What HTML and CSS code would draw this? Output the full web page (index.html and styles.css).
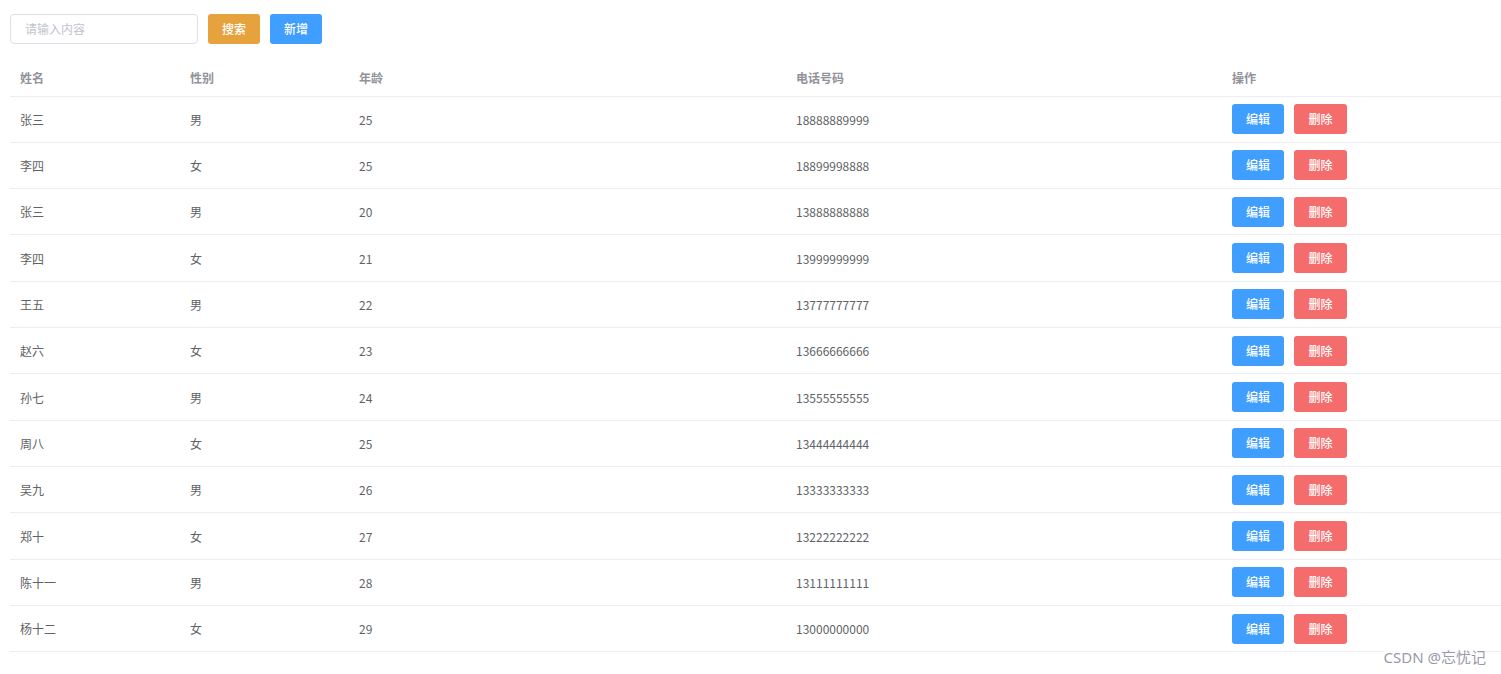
FILE: index.html
```html
<!DOCTYPE html>
<html>
<head>
<meta charset="utf-8">
<link rel="stylesheet" href="styles.css">
</head>
<body>
<div class="page">
  <div class="toolbar">
    <input class="search-input" type="text" placeholder="请输入内容">
    <button class="btn btn-warning">搜索</button>
    <button class="btn btn-primary">新增</button>
  </div>
  <table class="table">
    <colgroup>
      <col class="c1"><col class="c2"><col class="c3"><col class="c4"><col class="c5">
    </colgroup>
    <thead>
      <tr><th>姓名</th><th>性别</th><th>年龄</th><th>电话号码</th><th>操作</th></tr>
    </thead>
    <tbody>
      <tr><td>张三</td><td>男</td><td>25</td><td>18888889999</td><td><div class="ops"><button class="btn btn-primary">编辑</button><button class="btn btn-danger">删除</button></div></td></tr>
      <tr><td>李四</td><td>女</td><td>25</td><td>18899998888</td><td><div class="ops"><button class="btn btn-primary">编辑</button><button class="btn btn-danger">删除</button></div></td></tr>
      <tr><td>张三</td><td>男</td><td>20</td><td>13888888888</td><td><div class="ops"><button class="btn btn-primary">编辑</button><button class="btn btn-danger">删除</button></div></td></tr>
      <tr><td>李四</td><td>女</td><td>21</td><td>13999999999</td><td><div class="ops"><button class="btn btn-primary">编辑</button><button class="btn btn-danger">删除</button></div></td></tr>
      <tr><td>王五</td><td>男</td><td>22</td><td>13777777777</td><td><div class="ops"><button class="btn btn-primary">编辑</button><button class="btn btn-danger">删除</button></div></td></tr>
      <tr><td>赵六</td><td>女</td><td>23</td><td>13666666666</td><td><div class="ops"><button class="btn btn-primary">编辑</button><button class="btn btn-danger">删除</button></div></td></tr>
      <tr><td>孙七</td><td>男</td><td>24</td><td>13555555555</td><td><div class="ops"><button class="btn btn-primary">编辑</button><button class="btn btn-danger">删除</button></div></td></tr>
      <tr><td>周八</td><td>女</td><td>25</td><td>13444444444</td><td><div class="ops"><button class="btn btn-primary">编辑</button><button class="btn btn-danger">删除</button></div></td></tr>
      <tr><td>吴九</td><td>男</td><td>26</td><td>13333333333</td><td><div class="ops"><button class="btn btn-primary">编辑</button><button class="btn btn-danger">删除</button></div></td></tr>
      <tr><td>郑十</td><td>女</td><td>27</td><td>13222222222</td><td><div class="ops"><button class="btn btn-primary">编辑</button><button class="btn btn-danger">删除</button></div></td></tr>
      <tr><td>陈十一</td><td>男</td><td>28</td><td>13111111111</td><td><div class="ops"><button class="btn btn-primary">编辑</button><button class="btn btn-danger">删除</button></div></td></tr>
      <tr><td>杨十二</td><td>女</td><td>29</td><td>13000000000</td><td><div class="ops"><button class="btn btn-primary">编辑</button><button class="btn btn-danger">删除</button></div></td></tr>
    </tbody>
  </table>
  <div class="watermark">CSDN @忘忧记</div>
</div>
</body>
</html>
```
FILE: styles.css
```css
html, body {
  margin: 0;
  padding: 0;
  background: #ffffff;
}
body {
  font-family: "Noto Sans CJK SC", "Noto Sans", sans-serif;
  font-size: 12px;
  color: #606266;
}
.page {
  position: relative;
  padding: 14px 0 0 10px;
  width: 1491px;
  height: 660px;
}
.toolbar {
  display: flex;
  align-items: center;
  gap: 10px;
  height: 30px;
}
.search-input {
  box-sizing: border-box;
  width: 188px;
  height: 30px;
  border: 1px solid #dcdfe6;
  border-radius: 4px;
  padding: 0 14px;
  font-family: inherit;
  font-size: 12px;
  color: #606266;
  outline: none;
  margin-top: -1px;
}
.search-input::placeholder {
  color: #c0c4cc;
}
.btn {
  box-sizing: border-box;
  height: 30px;
  width: 52px;
  border: none;
  border-radius: 3px;
  color: #ffffff;
  font-family: inherit;
  font-size: 12px;
  font-weight: 500;
  padding: 0;
  cursor: pointer;
  line-height: 30px;
}
.btn-warning { background: #e6a23c; }
.btn-primary { background: #409eff; }
.btn-danger { background: #f56c6c; width: 53px; }
.table {
  margin-top: 15px;
  width: 1491px;
  border-collapse: collapse;
  table-layout: fixed;
}
.c1 { width: 170px; }
.c2 { width: 169px; }
.c3 { width: 437px; }
.c4 { width: 436px; }
.c5 { width: 279px; }
th {
  text-align: left;
  color: #909399;
  font-weight: 700;
  height: 37px;
  padding: 0 10px;
  border-bottom: 1px solid #ebeef5;
  box-sizing: border-box;
}
td {
  text-align: left;
  height: 45.33px;
  padding: 0 10px;
  border-bottom: 1px solid #ebeef5;
  vertical-align: middle;
}
.ops {
  display: flex;
  gap: 10px;
  align-items: center;
}
.watermark {
  position: absolute;
  right: 15px;
  top: 646px;
  font-size: 15px;
  color: #999aaa;
  font-family: "Noto Sans", "Noto Sans CJK SC", sans-serif;
  background: rgba(255,255,255,0.6);
}
```
